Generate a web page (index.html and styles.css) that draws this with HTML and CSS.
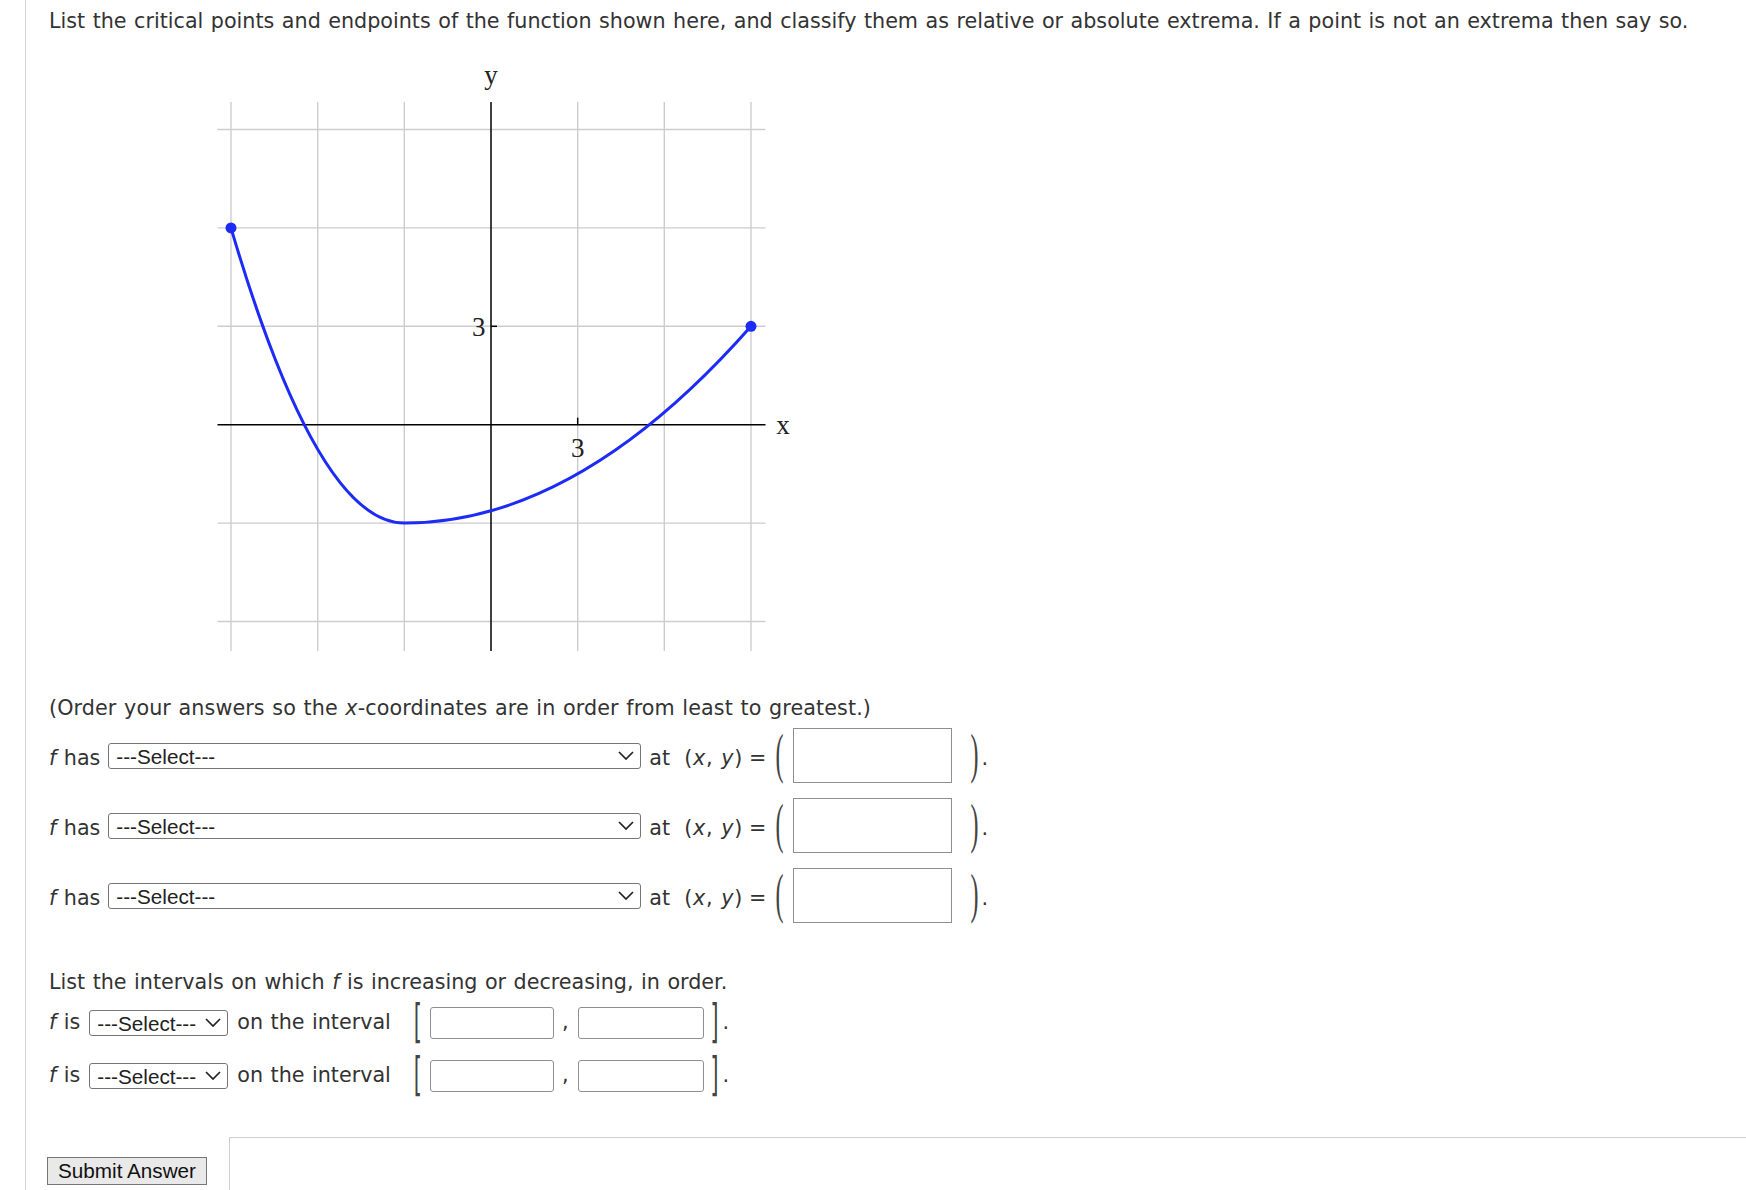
FILE: index.html
```html
<!DOCTYPE html>
<html>
<head>
<meta charset="utf-8">
<link rel="stylesheet" href="styles.css">
</head>
<body>
<div class="page">
  <p class="prompt">List the critical points and endpoints of the function shown here, and classify them as relative or absolute extrema. If a point is not an extrema then say so.</p>

  <svg class="graph" width="600" height="610" viewBox="0 -10 600 610">
    <g class="grid">
      <line x1="31" y1="42" x2="31" y2="591"/>
      <line x1="117.7" y1="42" x2="117.7" y2="591"/>
      <line x1="204.3" y1="42" x2="204.3" y2="591"/>
      <line x1="377.7" y1="42" x2="377.7" y2="591"/>
      <line x1="464.3" y1="42" x2="464.3" y2="591"/>
      <line x1="551" y1="42" x2="551" y2="591"/>
      <line x1="17.5" y1="69.5" x2="565.5" y2="69.5"/>
      <line x1="17.5" y1="167.9" x2="565.5" y2="167.9"/>
      <line x1="17.5" y1="266.3" x2="565.5" y2="266.3"/>
      <line x1="17.5" y1="463.1" x2="565.5" y2="463.1"/>
      <line x1="17.5" y1="561.5" x2="565.5" y2="561.5"/>
    </g>
    <g class="axes">
      <line x1="291" y1="42" x2="291" y2="591"/>
      <line x1="17.5" y1="364.7" x2="565.5" y2="364.7"/>
      <line x1="377.7" y1="364.7" x2="377.7" y2="357.7"/>
      <line x1="291" y1="266.3" x2="297" y2="266.3"/>
    </g>
    <path class="curve" d="M31 167.9 Q117.7 463.1 204.3 463.1 Q377.7 463.1 551 266.3"/>
    <circle class="dot" cx="31" cy="167.9" r="5.5"/>
    <circle class="dot" cx="551" cy="266.3" r="5.5"/>
    <text class="axis-label" x="291" y="24" text-anchor="middle">y</text>
    <text class="axis-label" x="583" y="374" text-anchor="middle">x</text>
    <text class="axis-label" x="285.5" y="276" text-anchor="end">3</text>
    <text class="axis-label" x="377.7" y="396.5" text-anchor="middle">3</text>
  </svg>

  <p class="note">(Order your answers so the <i>x</i>-coordinates are in order from least to greatest.)</p>

  <div class="prow first">
    <span class="lbl"><i>f</i> has</span>
    <span class="sel sel-wide"><select class="sel-box"><option>---Select---</option></select><svg class="chev" width="16" height="9" viewBox="0 0 16 9"><path d="M1 1 L8 8 L15 1"/></svg></span>
    <span class="at">at</span>
    <span class="math">(<i>x</i>, <i>y</i>)</span>
    <span class="eq">=</span>
    <span class="paren p-open">(</span>
    <input class="pt" type="text">
    <span class="paren p-close">)</span><span class="dot-end">.</span>
  </div>
  <div class="prow">
    <span class="lbl"><i>f</i> has</span>
    <span class="sel sel-wide"><select class="sel-box"><option>---Select---</option></select><svg class="chev" width="16" height="9" viewBox="0 0 16 9"><path d="M1 1 L8 8 L15 1"/></svg></span>
    <span class="at">at</span>
    <span class="math">(<i>x</i>, <i>y</i>)</span>
    <span class="eq">=</span>
    <span class="paren p-open">(</span>
    <input class="pt" type="text">
    <span class="paren p-close">)</span><span class="dot-end">.</span>
  </div>
  <div class="prow">
    <span class="lbl"><i>f</i> has</span>
    <span class="sel sel-wide"><select class="sel-box"><option>---Select---</option></select><svg class="chev" width="16" height="9" viewBox="0 0 16 9"><path d="M1 1 L8 8 L15 1"/></svg></span>
    <span class="at">at</span>
    <span class="math">(<i>x</i>, <i>y</i>)</span>
    <span class="eq">=</span>
    <span class="paren p-open">(</span>
    <input class="pt" type="text">
    <span class="paren p-close">)</span><span class="dot-end">.</span>
  </div>

  <p class="note2">List the intervals on which <i>f</i> is increasing or decreasing, in order.</p>

  <div class="irow first">
    <span class="lbl"><i>f</i> is</span>
    <span class="sel sel-narrow"><select class="sel-box"><option>---Select---</option></select><svg class="chev" width="16" height="9" viewBox="0 0 16 9"><path d="M1 1 L8 8 L15 1"/></svg></span>
    <span class="oti">on the interval</span>
    <span class="brk b-open">[</span>
    <input class="iv iv1" type="text">
    <span class="comma">,</span>
    <input class="iv iv2" type="text">
    <span class="brk b-close">]</span><span class="dot-end2">.</span>
  </div>
  <div class="irow">
    <span class="lbl"><i>f</i> is</span>
    <span class="sel sel-narrow"><select class="sel-box"><option>---Select---</option></select><svg class="chev" width="16" height="9" viewBox="0 0 16 9"><path d="M1 1 L8 8 L15 1"/></svg></span>
    <span class="oti">on the interval</span>
    <span class="brk b-open">[</span>
    <input class="iv iv1" type="text">
    <span class="comma">,</span>
    <input class="iv iv2" type="text">
    <span class="brk b-close">]</span><span class="dot-end2">.</span>
  </div>

  <div class="actions">
    <div class="submit-cell"><button class="submit" type="button">Submit Answer</button></div>
    <div class="feedback"></div>
  </div>
</div>
</body>
</html>
```

FILE: styles.css
```css
html, body {
  margin: 0;
  padding: 0;
  background: #fff;
  overflow: hidden;
}

body {
  font-family: "DejaVu Sans", Verdana, sans-serif;
  font-size: 20.7px;
  color: #333;
  word-spacing: 0.9px;
}

.page {
  margin-left: 25px;
  border-left: 1px solid #d2d2d2;
  padding: 9px 0 0 23px;
  min-height: 1190px;
  box-sizing: border-box;
  line-height: 25px;
}

p { margin: 0; }

.prompt { white-space: nowrap; }

.graph {
  display: block;
  margin: 16px 0 0 151px;
}

.grid line {
  stroke: #cdcdcd;
  stroke-width: 1.4;
}

.axes line {
  stroke: #000;
  stroke-width: 1.5;
}

.curve {
  fill: none;
  stroke: #1c2cf6;
  stroke-width: 3;
  stroke-linecap: round;
}

.dot { fill: #1c2cf6; }

.axis-label {
  font-family: "Liberation Serif", "Times New Roman", serif;
  font-size: 27px;
  fill: #222;
}

.note {
  margin-top: 36px;
  letter-spacing: 0.1px;
}

.prow {
  display: flex;
  align-items: center;
  height: 55px;
  white-space: nowrap;
}
.prow.first { margin-top: 7px; }
.prow + .prow { margin-top: 15px; }

.prow .lbl,
.prow .at,
.prow .math,
.prow .eq,
.prow .dot-end {
  padding-top: 5px;
}

.lbl { flex: none; }

.sel {
  position: relative;
  display: inline-block;
  height: 26px;
  flex: none;
}
.sel-wide { margin-left: 8px; }
.sel-narrow { margin-left: 9px; }

.sel-box {
  appearance: none;
  -webkit-appearance: none;
  display: block;
  box-sizing: border-box;
  height: 26px;
  margin: 0;
  padding: 2px 30px 0 7px;
  border: 1px solid #767676;
  border-radius: 3px;
  background: #fff;
  color: #222;
  font-family: "Liberation Sans", Arial, sans-serif;
  font-size: 20.7px;
  line-height: 22px;
  word-spacing: 0;
}
.sel-wide .sel-box { width: 533px; }
.sel-narrow .sel-box { width: 139px; }

.chev {
  position: absolute;
  right: 7px;
  top: 8px;
  pointer-events: none;
}
.chev path {
  fill: none;
  stroke: #222;
  stroke-width: 1.7;
}

.at { margin-left: 8px; }
.math {
  margin-left: 14px;
  letter-spacing: 0.7px;
}
.eq { margin-left: 6px; }

.paren {
  display: inline-block;
  font-family: "Liberation Serif", "Times New Roman", serif;
  font-size: 24px;
  line-height: 25px;
  color: #444;
  transform: scaleY(2.25);
}
.p-open { margin-left: 9px; }
.p-close { margin-left: 18px; }

.pt {
  box-sizing: border-box;
  width: 159px;
  height: 55px;
  margin: 0 0 0 10px;
  padding: 0 4px;
  border: 1px solid #8f8f8f;
  border-radius: 0;
  background: #fff;
  flex: none;
}

.dot-end { margin-left: 3px; }

.note2 {
  margin-top: 47px;
}

.irow {
  display: flex;
  align-items: center;
  height: 41px;
  white-space: nowrap;
}
.irow.first { margin-top: 7px; }
.irow + .irow { margin-top: 12px; }

.oti { margin-left: 9px; }

.brk {
  display: inline-block;
  font-size: 20.7px;
  color: #444;
  transform: scaleY(2.23);
}
.b-open { margin-left: 23px; }
.b-close { margin-left: 7px; }

.iv {
  box-sizing: border-box;
  height: 32px;
  margin: 0;
  padding: 0 4px;
  border: 1px solid #8f8f8f;
  border-radius: 3px;
  background: #fff;
  flex: none;
}
.iv1 { width: 124px; margin-left: 8px; }
.iv2 { width: 126px; margin-left: 9px; }

.comma { margin-left: 8px; }
.dot-end2 { margin-left: 4px; }

.actions {
  display: flex;
  align-items: flex-start;
  margin-top: 41px;
}

.submit-cell {
  flex: none;
  width: 180px;
  padding-top: 20px;
}

.submit {
  display: block;
  box-sizing: border-box;
  width: 160px;
  height: 28px;
  margin: 0 0 0 -2px;
  padding: 0;
  border: 1px solid #767676;
  border-radius: 0;
  background: #e9e9e9;
  color: #111;
  font-family: "Liberation Sans", Arial, sans-serif;
  font-size: 20.7px;
  line-height: 26px;
  word-spacing: 0;
}

.feedback {
  flex: 1;
  height: 53px;
  border-top: 1px solid #cfcfcf;
  border-left: 1px solid #cfcfcf;
}
```
